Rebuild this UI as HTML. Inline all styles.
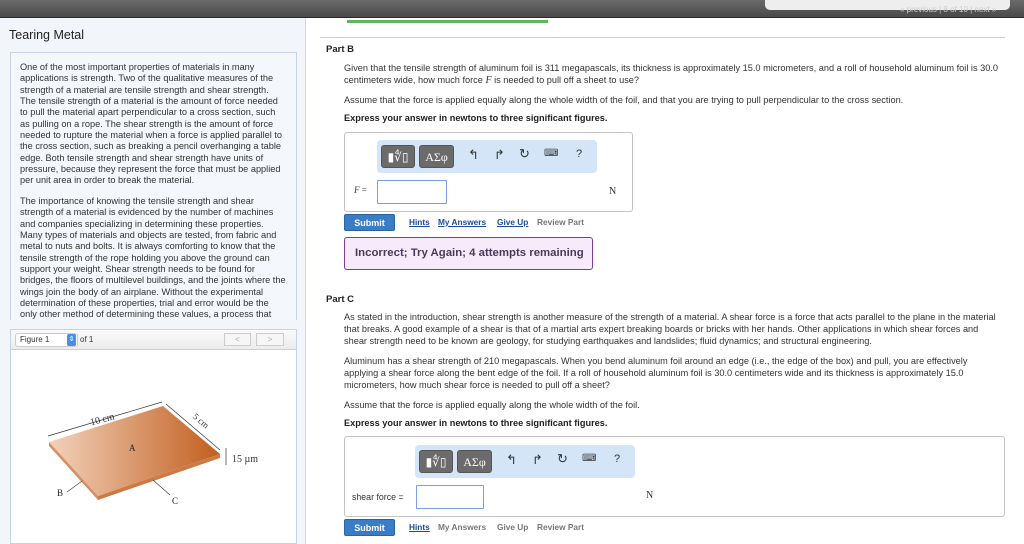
<!DOCTYPE html>
<html><head><meta charset="utf-8"><style>
*{margin:0;padding:0;box-sizing:border-box}
body{width:1024px;height:544px;overflow:hidden;background:#fff;font-family:"Liberation Sans",Arial,sans-serif;color:#333;position:relative}
.abs{position:absolute}
.top{left:0;top:0;width:1024px;height:18px;background:linear-gradient(#6a6a6a,#4a4a4a);border-bottom:1px solid #2a2a2a}
.pill{left:765px;top:0;width:245px;height:10px;background:#eee;border-radius:0 0 5px 5px}
.nav{left:900px;top:5px;font-size:8px;color:#ccc}
.left{left:0;top:18px;width:306px;height:526px;background:#f2f5f9;border-right:1px solid #d0d8e2}
.lt{font-size:9.2px;line-height:11.35px;white-space:nowrap;color:#333}
.rt{font-size:9.2px;line-height:11.8px;white-space:nowrap;color:#333}
.b{font-weight:bold}
.box{border:1px solid #c5c5c5;border-radius:3px;background:#fff}
.tb{background:#d4e5f8;border-radius:4px;height:33px}
.btn{position:absolute;top:5px;height:23px;background:#6b6b6b;border-radius:3px;border:1px solid #555;color:#fff;font-family:"Liberation Serif",serif;font-size:12px;text-align:center;line-height:22px}
.ico{position:absolute;top:9px;font-size:13px;color:#333}
.inp{border:1.5px solid #7aa0dd;background:#fff;border-radius:1px}
.sub{background:#3a7cc6;color:#fff;font-size:9px;font-weight:bold;text-align:center;line-height:16px;border-radius:2px;border:1px solid #2a62a6}
.lk{font-size:8.3px;font-weight:bold;white-space:nowrap}
</style></head><body>
<div class="abs top"></div>
<div class="abs pill"></div>
<div class="abs nav">« previous | 8 of 10 | next »</div>
<div class="abs left"></div>
<div class="abs" style="left:9px;top:28px;font-size:12.5px;color:#222">Tearing Metal</div>
<div class="abs" style="left:10px;top:52px;width:287px;height:268px;border:1px solid #c5d3e2;border-bottom:none;background:#f4f7fb"></div>
<div class="abs lt" style="left:20px;top:62px">One of the most important properties of materials in many<br>applications is strength. Two of the qualitative measures of the<br>strength of a material are tensile strength and shear strength.<br>The tensile strength of a material is the amount of force needed<br>to pull the material apart perpendicular to a cross section, such<br>as pulling on a rope. The shear strength is the amount of force<br>needed to rupture the material when a force is applied parallel to<br>the cross section, such as breaking a pencil overhanging a table<br>edge. Both tensile strength and shear strength have units of<br>pressure, because they represent the force that must be applied<br>per unit area in order to break the material.</div>
<div class="abs lt" style="left:20px;top:196px">The importance of knowing the tensile strength and shear<br>strength of a material is evidenced by the number of machines<br>and companies specializing in determining these properties.<br>Many types of materials and objects are tested, from fabric and<br>metal to nuts and bolts. It is always comforting to know that the<br>tensile strength of the rope holding you above the ground can<br>support your weight. Shear strength needs to be found for<br>bridges, the floors of multilevel buildings, and the joints where the<br>wings join the body of an airplane. Without the experimental<br>determination of these properties, trial and error would be the<br>only other method of determining these values, a process that</div>
<div class="abs" style="left:0;top:320px;width:305px;height:10px;background:#f2f5f9"></div>
<div class="abs" style="left:10px;top:329px;width:287px;height:215px;border:1px solid #c5d3e2;background:#fff"></div>
<div class="abs" style="left:11px;top:330px;width:285px;height:20px;background:linear-gradient(#fafafa,#ececec);border-bottom:1px solid #d0d0d0"></div>
<div class="abs" style="left:15px;top:333px;width:63px;height:14px;background:#fff;border:1px solid #ccc;border-radius:3px;font-size:8px;line-height:12px;padding-left:4px">Figure 1</div>
<div class="abs" style="left:67px;top:334px;width:9px;height:12px;background:#4a90e2;border-radius:2px;color:#fff;font-size:7px;text-align:center;line-height:12px">⇕</div>
<div class="abs" style="left:80px;top:335px;font-size:8px">of 1</div>
<div class="abs" style="left:224px;top:333px;width:27px;height:13px;border:1px solid #ccc;background:#f6f6f6;font-size:8px;color:#aaa;text-align:center;line-height:12px">&lt;</div>
<div class="abs" style="left:256px;top:333px;width:28px;height:13px;border:1px solid #ccc;background:#f6f6f6;font-size:8px;color:#aaa;text-align:center;line-height:12px">&gt;</div>
<svg class="abs" style="left:0;top:320px" width="310" height="224">
<defs><linearGradient id="g" x1="0" x2="1"><stop offset="0" stop-color="#f2d2bb"/><stop offset="1" stop-color="#c25e1f"/></linearGradient></defs>
<polygon points="49,122 163,86 220,134 98,176" fill="url(#g)"/>
<polygon points="49,122 98,176 98,180 49,126" fill="#d49067"/>
<polygon points="98,176 220,134 220,138 98,180" fill="#cc7a45"/>
<line x1="48" y1="116" x2="162" y2="82" stroke="#333" stroke-width="0.7"/>
<line x1="166" y1="84" x2="220" y2="130" stroke="#333" stroke-width="0.7"/>
<text x="90" y="103" font-family="Liberation Serif" font-size="10" fill="#333" transform="rotate(-15 100 100)">10 cm</text>
<text x="188" y="101" font-family="Liberation Serif" font-size="9" fill="#333" transform="rotate(40 195 105)">5 cm</text>
<text x="129" y="131" font-family="Liberation Serif" font-size="9" fill="#222">A</text>
<line x1="226" y1="128" x2="226" y2="145" stroke="#333" stroke-width="0.7"/>
<text x="232" y="142" font-family="Liberation Serif" font-size="10" fill="#333">15 µm</text>
<line x1="67" y1="172" x2="82" y2="161" stroke="#333" stroke-width="0.6"/>
<text x="57" y="176" font-family="Liberation Serif" font-size="9" fill="#222">B</text>
<line x1="153" y1="160" x2="170" y2="175" stroke="#333" stroke-width="0.6"/>
<text x="172" y="184" font-family="Liberation Serif" font-size="9" fill="#222">C</text>
</svg>

<div class="abs" style="left:347px;top:20px;width:201px;height:3px;background:#5cb85c"></div>
<div class="abs" style="left:320px;top:37px;width:685px;height:1px;background:#ccc"></div>
<div class="abs b" style="left:326px;top:44px;font-size:9.5px;color:#222">Part B</div>
<div class="abs rt" style="left:344px;top:63px">Given that the tensile strength of aluminum foil is 311 megapascals, its thickness is approximately 15.0 micrometers, and a roll of household aluminum foil is 30.0<br>centimeters wide, how much force <i style="font-family:'Liberation Serif';font-size:10px">F</i> is needed to pull off a sheet to use?</div>
<div class="abs rt" style="left:344px;top:95px">Assume that the force is applied equally along the whole width of the foil, and that you are trying to pull perpendicular to the cross section.</div>
<div class="abs rt b" style="left:344px;top:113px;color:#222">Express your answer in newtons to three significant figures.</div>
<div class="abs box" style="left:344px;top:132px;width:289px;height:80px"></div>
<div class="abs tb" style="left:377px;top:140px;width:220px">
<div class="btn" style="left:4px;width:34px">▮∜▯</div><div class="btn" style="left:42px;width:35px">ΑΣφ</div>
<span class="ico" style="left:91px;top:7px">↰</span><span class="ico" style="left:117px;top:7px">↱</span><span class="ico" style="left:142px;top:6px">↻</span><span class="ico" style="left:167px;top:8px;font-size:10px">⌨</span><span class="ico" style="left:199px;top:8px;font-size:11px">?</span></div>
<div class="abs" style="left:354px;top:185px;font-size:9px;font-family:'Liberation Serif'"><i>F</i> =</div>
<div class="abs inp" style="left:377px;top:180px;width:70px;height:24px"></div>
<div class="abs" style="left:609px;top:186px;font-size:10px;font-family:'Liberation Serif'">N</div>
<div class="abs sub" style="left:344px;top:214px;width:51px;height:17px">Submit</div>
<div class="abs lk" style="left:409px;top:217px;color:#1a4a9a;text-decoration:underline">Hints</div>
<div class="abs lk" style="left:438px;top:217px;color:#1a4a9a;text-decoration:underline">My Answers</div>
<div class="abs lk" style="left:497px;top:217px;color:#1a4a9a;text-decoration:underline">Give Up</div>
<div class="abs lk" style="left:537px;top:217px;color:#777">Review Part</div>
<div class="abs" style="left:344px;top:237px;width:249px;height:33px;background:#f7ebfb;border:1px solid #7a3e9a;border-radius:3px;font-size:11.4px;font-weight:bold;color:#4a3a5a;line-height:31px;padding-left:10px;white-space:nowrap">Incorrect; Try Again; 4 attempts remaining</div>

<div class="abs b" style="left:326px;top:294px;font-size:9.5px;color:#222">Part C</div>
<div class="abs rt" style="left:344px;top:312px">As stated in the introduction, shear strength is another measure of the strength of a material. A shear force is a force that acts parallel to the plane in the material<br>that breaks. A good example of a shear is that of a martial arts expert breaking boards or bricks with her hands. Other applications in which shear forces and<br>shear strength need to be known are geology, for studying earthquakes and landslides; fluid dynamics; and structural engineering.</div>
<div class="abs rt" style="left:344px;top:356px">Aluminum has a shear strength of 210 megapascals. When you bend aluminum foil around an edge (i.e., the edge of the box) and pull, you are effectively<br>applying a shear force along the bent edge of the foil. If a roll of household aluminum foil is 30.0 centimeters wide and its thickness is approximately 15.0<br>micrometers, how much shear force is needed to pull off a sheet?</div>
<div class="abs rt" style="left:344px;top:400px">Assume that the force is applied equally along the whole width of the foil.</div>
<div class="abs rt b" style="left:344px;top:418px;color:#222">Express your answer in newtons to three significant figures.</div>
<div class="abs box" style="left:344px;top:436px;width:661px;height:81px"></div>
<div class="abs tb" style="left:415px;top:445px;width:220px">
<div class="btn" style="left:4px;width:34px">▮∜▯</div><div class="btn" style="left:42px;width:35px">ΑΣφ</div>
<span class="ico" style="left:91px;top:7px">↰</span><span class="ico" style="left:117px;top:7px">↱</span><span class="ico" style="left:142px;top:6px">↻</span><span class="ico" style="left:167px;top:8px;font-size:10px">⌨</span><span class="ico" style="left:199px;top:8px;font-size:11px">?</span></div>
<div class="abs" style="left:352px;top:492px;font-size:8.8px">shear force =</div>
<div class="abs inp" style="left:416px;top:485px;width:68px;height:24px"></div>
<div class="abs" style="left:646px;top:490px;font-size:10px;font-family:'Liberation Serif'">N</div>
<div class="abs sub" style="left:344px;top:519px;width:51px;height:17px">Submit</div>
<div class="abs lk" style="left:409px;top:522px;color:#1a4a9a;text-decoration:underline">Hints</div>
<div class="abs lk" style="left:438px;top:522px;color:#777">My Answers</div>
<div class="abs lk" style="left:497px;top:522px;color:#777">Give Up</div>
<div class="abs lk" style="left:537px;top:522px;color:#777">Review Part</div>
</body></html>
